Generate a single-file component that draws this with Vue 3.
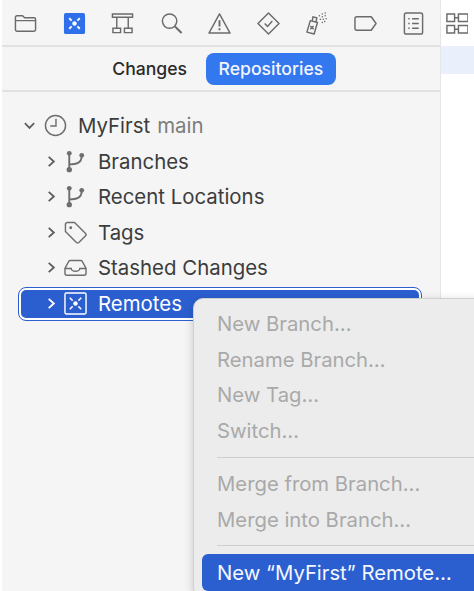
<script setup>
const disabledTop = ['New Branch…', 'Rename Branch…', 'New Tag…', 'Switch…']
const disabledMerge = ['Merge from Branch…', 'Merge into Branch…']
const rows = [
  { label: 'Branches', icon: 'branch' },
  { label: 'Recent Locations', icon: 'branch' },
  { label: 'Tags', icon: 'tag' },
  { label: 'Stashed Changes', icon: 'tray' },
]
</script>

<template>
  <div class="page">
    <aside class="sidebar">
      <nav class="toolbar">
        <!-- folder -->
        <svg class="tool" viewBox="0 0 24 24"><path d="M1.500 6.500v12a1.500 1.500 0 0 0 1.500 1.500h18a1.500 1.500 0 0 0 1.500-1.500V7.500A1.500 1.500 0 0 0 21 6H11L9 4H3a1.500 1.500 0 0 0-1.500 1.500v1M1.500 9h21" /></svg>
        <!-- source control, active -->
        <svg class="tool" viewBox="0 0 24 24">
          <rect class="fill-blue" x="1" y="1" width="22" height="22" rx="2" />
          <circle class="fill-white" cx="12" cy="12" r="2.300" />
          <path class="line-white" d="M6.500 6.500l2.500 2.500M17.500 6.500L15 9M6.500 17.500L9 15M17.500 17.500L15 15" />
        </svg>
        <!-- hierarchy -->
        <svg class="tool" viewBox="0 0 24 24"><path d="M1.500 2h21v3.500h-21zM6 5.500V17M18 5.500V17M2 17h8v4.500H2zM14 17h8v4.500h-8z" /></svg>
        <!-- search -->
        <svg class="tool" viewBox="0 0 24 24"><circle cx="10" cy="9.500" r="7.500" /><path d="M15.500 15l7 7" stroke-width="2.200" /></svg>
        <!-- warning -->
        <svg class="tool" viewBox="0 0 24 24"><path d="M12 2L23 22H1z" stroke-linejoin="round" /><path d="M12 8.500v6.500M12 17v2" stroke-width="2" /></svg>
        <!-- test diamond -->
        <svg class="tool" viewBox="0 0 24 24"><path d="M12 1L23 12 12 23 1 12z" stroke-linejoin="round" /><path d="M8 12l3 3 5-5.500" /></svg>
        <!-- spray -->
        <svg class="tool" viewBox="0 0 24 24">
          <path d="M5.500 9l7.500 2-3.500 12-7.500-2z" stroke-linejoin="round" />
          <path d="M7.500 9.500l.8-4.500 4 1-.8 4.500M5.500 14.500l3.500 3.500M9 14.500L5.500 18" />
          <path class="dots" d="M15 4h.1M18 2h.1M21 1h.1M18 5h.1M21 4h.1M16 7.500h.1M19 7.500h.1M22 7h.1M18 11h.1M20.500 10h.1" />
        </svg>
        <!-- label -->
        <svg class="tool" viewBox="0 0 24 24"><path d="M3 5h15l5 7-5 7H3A2 2 0 0 1 1 17V7a2 2 0 0 1 2-2z" stroke-linejoin="round" /></svg>
        <!-- report list -->
        <svg class="tool" viewBox="0 0 24 24"><rect x="2.500" y="1" width="19" height="22" rx="2" /><path d="M6.500 7h1.500M10.500 7h7M6.500 12h1.500M10.500 12h7M6.500 17h1.500M10.500 17h7" /></svg>
      </nav>

      <div class="tabs">
        <span class="tab">Changes</span>
        <span class="tab active">Repositories</span>
      </div>

      <div class="tree">
        <div class="row root">
          <svg class="chev down" viewBox="0 0 14 14"><path d="M2 4.500l5 5 5-5" /></svg>
          <svg class="icon" viewBox="0 0 24 24"><circle cx="12" cy="12" r="10.500" /><path d="M12.500 5V12.500H6.500" /></svg>
          <span class="name">MyFirst</span>
          <span class="branch">main</span>
        </div>
        <div v-for="r in rows" :key="r.label" class="row child">
          <svg class="chev" viewBox="0 0 14 14"><path d="M4 2l5.500 5L4 12" /></svg>
          <svg v-if="r.icon === 'branch'" class="icon" viewBox="0 0 24 24">
            <path d="M5.500 4v16M5.500 15c7 0 13-1 13-9" stroke-width="2" />
            <circle class="fill-gray" cx="5.500" cy="3.500" r="2.500" />
            <circle class="fill-gray" cx="5.500" cy="20.500" r="2.800" />
            <circle class="fill-gray" cx="18.500" cy="5.500" r="2.500" />
          </svg>
          <svg v-else-if="r.icon === 'tag'" class="icon" viewBox="0 0 24 24">
            <path d="M1.500 3.500a2 2 0 0 1 2-2h7.500l11.500 11.500a2 2 0 0 1 0 2.500l-7 7a2 2 0 0 1-2.500 0L1.500 11z" stroke-linejoin="round" />
            <circle class="fill-gray" cx="7" cy="7" r="1.500" />
          </svg>
          <svg v-else class="icon" viewBox="0 0 24 24">
            <path d="M1 13l4-7.500a2 2 0 0 1 1.500-.800h11a2 2 0 0 1 1.500.800l4 7.500v5a2 2 0 0 1-2 2H3a2 2 0 0 1-2-2z" stroke-linejoin="round" />
            <path d="M1 13h6.500a4.500 3 0 0 0 9 0H23" />
          </svg>
          <span class="name">{{ r.label }}</span>
        </div>
        <div class="row child selected">
          <svg class="chev" viewBox="0 0 14 14"><path d="M4 2l5.500 5L4 12" /></svg>
          <svg class="icon" viewBox="0 0 24 24">
            <rect x="1" y="1" width="22" height="22" rx="1.500" />
            <circle class="fill-white" cx="12" cy="12" r="2.300" />
            <path d="M6 6l3 3M18 6l-3 3M6 18l3-3M18 18l-3-3" />
          </svg>
          <span class="name">Remotes</span>
        </div>
      </div>
    </aside>

    <main class="editor">
      <div class="editor-top">
        <svg class="tool" viewBox="0 0 24 24"><path d="M2 2h8v8H2zM2 14h8v8H2zM14 2h10v8H14zM14 14h10v8H14zM10 6h4M10 18h4" /></svg>
      </div>
      <div class="editor-line"></div>
    </main>

    <!-- context menu -->
    <div class="menu">
      <div v-for="t in disabledTop" :key="t" class="item">{{ t }}</div>
      <hr class="sep" />
      <div v-for="t in disabledMerge" :key="t" class="item">{{ t }}</div>
      <hr class="sep last" />
      <div class="item picked">New “MyFirst” Remote…</div>
    </div>
  </div>
</template>

<style>
html, body {
  margin: 0;
  background: #fff;
}
</style>

<style scoped>
.page {
  position: relative;
  display: flex;
  width: 474px;
  height: 591px;
  overflow: hidden;
  font-family: Inter, "Liberation Sans", sans-serif;
  color: #3c3c3c;
}
.sidebar {
  width: 438px;
  margin-left: 2px;
  background: #f5f5f5;
  border-right: 1px solid #e6e6e6;
  display: flex;
  flex-direction: column;
  flex: none;
}
.toolbar {
  height: 43px;
  margin-top: 2px;
  padding: 0 15px 0 12px;
  display: flex;
  align-items: center;
  justify-content: space-between;
  border-bottom: 2px solid #e2e2e2;
}
.tool {
  width: 23px;
  height: 23px;
  flex: none;
  fill: none;
  stroke: #6b6b6b;
  stroke-width: 1.500;
}
.tabs {
  height: 43px;
  display: flex;
  align-items: center;
  justify-content: center;
  gap: 19px;
  padding-left: 6px;
  border-bottom: 2px solid #e2e2e2;
  font-size: 17.600px;
  font-weight: 500;
}
.tab {
  color: #2a2a2a;
}
.tab.active {
  background: #3478f0;
  color: #f4f7ff;
  padding: 0 12.500px;
  height: 32px;
  line-height: 32px;
  border-radius: 8px;
}
.tree {
  padding: 16px 17px 0 15px;
  font-size: 20.400px;
}
.row {
  height: 35.500px;
  display: flex;
  align-items: center;
  box-sizing: border-box;
  white-space: nowrap;
}
.row.child {
  padding-left: 28px;
}
.row.root {
  padding-left: 6px;
}
.chev {
  width: 13px;
  height: 13px;
  flex: none;
  fill: none;
  stroke: #5f5f5f;
  stroke-width: 2;
  margin-right: 6px;
}
.chev.down {
  margin-right: 8px;
}
.icon {
  width: 23px;
  height: 23px;
  flex: none;
  fill: none;
  stroke: #6e6e6e;
  stroke-width: 1.500;
  margin-right: 11px;
}
.branch {
  color: #7d7d7d;
  margin-left: 7px;
}
.selected {
  height: 32px;
  margin: 2px 2px 0;
  background: #2b5fd0;
  color: #fff;
  border-radius: 7px;
  border: 2px solid #fff;
  outline: 1.500px solid #2b5fd0;
}
.row.child.selected {
  padding-left: 24px;
}
.selected .chev,
.selected .icon {
  stroke: #fff;
}
.fill-blue {
  fill: #2f70ea;
  stroke: none;
}
.fill-white {
  fill: #fff;
  stroke: none;
}
.fill-gray {
  fill: #6e6e6e;
  stroke: none;
}
.line-white {
  stroke: #fff;
  stroke-width: 2;
}
.dots {
  stroke-width: 1.500;
  stroke-linecap: round;
}
.editor {
  flex: 1;
  background: #fff;
}
.editor-top {
  height: 46px;
  padding-left: 4px;
  display: flex;
  align-items: center;
}
.editor-line {
  height: 28px;
  background: #e9f0fb;
}
.menu {
  position: absolute;
  left: 193px;
  top: 298px;
  width: 300px;
  height: 300px;
  box-sizing: border-box;
  padding: 7px 8px 0;
  background: #ececec;
  border: 1px solid #d0d0d0;
  border-radius: 10px;
  box-shadow: 0 2px 10px rgba(0, 0, 0, 0.18);
  font-size: 20.300px;
  color: #a9a9a9;
}
.item {
  height: 35.500px;
  line-height: 35.500px;
  padding-left: 15px;
  white-space: nowrap;
}
.sep {
  border: 0;
  border-top: 1px solid #cfcfcf;
  margin: 9px 0 8px 15px;
}
.sep.last {
  margin: 8px 0 8px 15px;
}
.picked {
  height: 37px;
  line-height: 37px;
  background: #2b5fd0;
  color: #f4f7ff;
  border-radius: 6px;
}
</style>
